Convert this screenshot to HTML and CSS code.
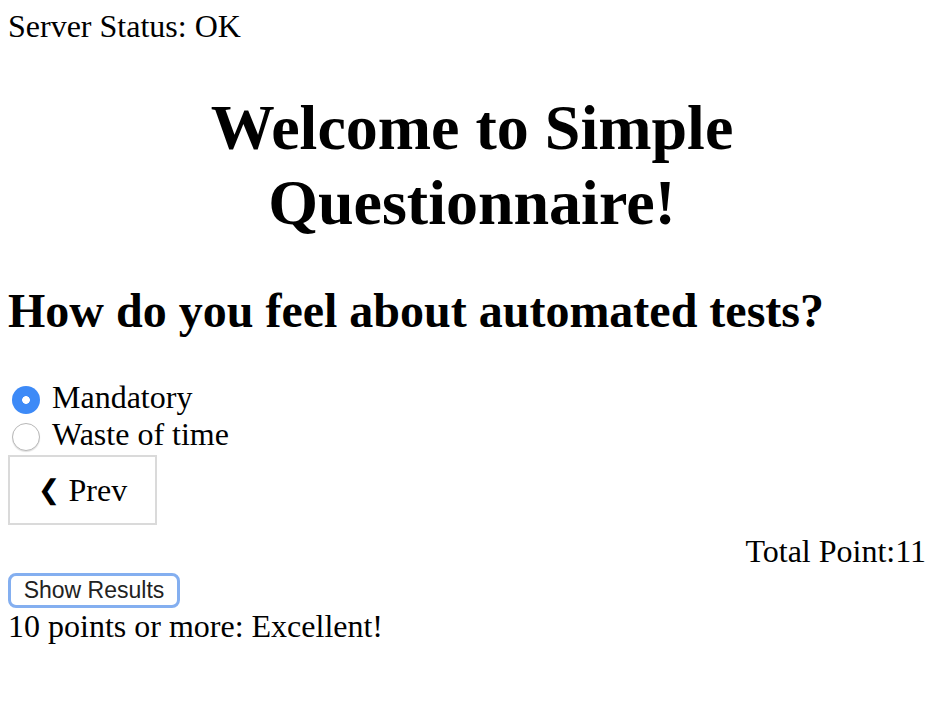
FILE: index.html
```html
<!DOCTYPE html>
<html lang="en">
<head>
<meta charset="utf-8">
<title>Simple Questionnaire</title>
<link rel="stylesheet" href="styles.css">
</head>
<body>
<div class="status">Server Status: OK</div>
<h1 class="title">Welcome to Simple Questionnaire!</h1>
<h2 class="question">How do you feel about automated tests?</h2>
<div class="options">
  <label class="option"><input class="radio" type="radio" name="answer" checked><span>Mandatory</span></label>
  <label class="option"><input class="radio" type="radio" name="answer"><span>Waste of time</span></label>
</div>
<button class="prev" type="button"><span class="chev">&#10094;</span>&nbsp;Prev</button>
<div class="total">Total Point:11</div>
<button class="results" type="button">Show Results</button>
<div class="verdict">10 points or more: Excellent!</div>
</body>
</html>
```

FILE: styles.css
```css
html, body {
  background: #ffffff;
}
body {
  margin: 8px;
  font-family: "Liberation Serif", "Times New Roman", serif;
  font-size: 32px;
  color: #000;
}
.status {
  line-height: normal;
}
.title {
  font-size: 64px;
  font-weight: bold;
  text-align: center;
  margin: 45px 0 43px;
  line-height: 75px;
}
.question {
  font-size: 48px;
  font-weight: bold;
  margin: 42px 0 40px;
}
.options {
  padding-top: 1px;
  padding-bottom: 2px;
}
.option {
  display: flex;
  align-items: flex-start;
  line-height: 37px;
}
.radio {
  appearance: none;
  -webkit-appearance: none;
  width: 28px;
  height: 28px;
  margin: 7px 12px 0 4px;
  border-radius: 50%;
  flex: none;
  box-sizing: border-box;
  background: #ffffff;
  border: 1px solid #b8b8b8;
  box-shadow: 0 1px 1px rgba(0, 0, 0, 0.12);
}
.radio:checked {
  border: none;
  box-shadow: none;
  background: radial-gradient(circle, #ffffff 0 3.5px, #3d8af7 4.2px);
}
.prev {
  display: flex;
  align-items: center;
  justify-content: center;
  width: 149px;
  height: 70px;
  padding: 0;
  margin: 0;
  background: #ffffff;
  border: 2px solid #dadada;
  font-family: "Liberation Serif", "Times New Roman", serif;
  font-size: 32px;
  color: #000;
}
.chev {
  font-family: "DejaVu Sans", sans-serif;
  font-size: 27px;
  font-weight: bold;
  position: relative;
  top: -1px;
}
.total {
  margin-top: 8px;
  text-align: right;
  padding-right: 10px;
  line-height: 37px;
}
.results {
  display: block;
  margin: 3px 0 0;
  width: 172px;
  height: 35px;
  padding: 0;
  box-sizing: border-box;
  background: #ffffff;
  border: 3px solid #84aff0;
  border-radius: 8px;
  font-family: "Liberation Sans", Arial, sans-serif;
  font-size: 23px;
  color: #222222;
}
.verdict {
  line-height: 37px;
}
```
